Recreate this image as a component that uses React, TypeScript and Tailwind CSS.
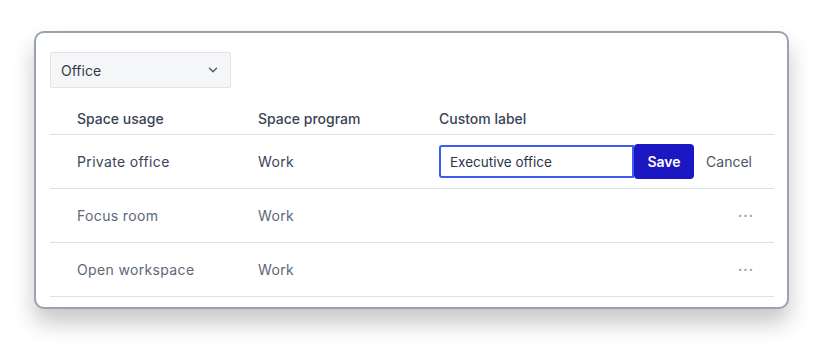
import { ChevronDown } from 'lucide-react';

const rows = [
  { usage: 'Private office', program: 'Work', editing: true },
  { usage: 'Focus room', program: 'Work', editing: false },
  { usage: 'Open workspace', program: 'Work', editing: false },
];

function Row({ usage, program, editing }: { usage: string; program: string; editing: boolean }) {
  const tone = editing ? 'text-[#3a4556]' : 'text-[#5d6778]';
  return (
    <div className="grid h-[54px] grid-cols-[181px_181px_1fr] items-center border-b border-[#dde1e8]">
      <div className={`pl-[27px] text-[14px] tracking-[0.35px] ${tone}`}>{usage}</div>
      <div className={`pl-[27px] text-[14px] tracking-[0.35px] ${tone}`}>{program}</div>
      <div className="flex items-center pl-[27px] pr-[22px]">
        {editing ? (
          <>
            <input
              defaultValue="Executive office"
              className="h-[33px] w-[195px] rounded-l-[3px] border-2 border-[#3d5cf2] bg-white px-[9px] text-[13.5px] text-[#2d3646] outline-none"
            />
            <button className="h-[35px] w-[60px] rounded-[4px] bg-[#1b17c2] text-[14px] font-semibold text-white">
              Save
            </button>
            <button className="ml-auto text-[14px] text-[#4b5565]">Cancel</button>
          </>
        ) : (
          <span className="-mr-[2px] ml-auto text-[13px] font-bold leading-none tracking-[1px] text-[#9aa3b1]">···</span>
        )}
      </div>
    </div>
  );
}

export default function App() {
  return (
    <div className="h-[352px] w-[824px] bg-white pl-[34px] pt-[31px] font-['Inter','Noto_Sans',sans-serif]">
      <div className="h-[278px] w-[755px] rounded-[10px] border-2 border-[#99a2af] bg-white px-[14px] pt-[19px] shadow-[0_14px_22px_rgba(0,0,0,0.22)]">
        <button className="flex h-[36px] w-[181px] items-center justify-between rounded-[2px] border border-[#e0e3e8] bg-[#f5f6f8] pl-[10px] pr-[10px] text-[14px] text-[#333b48]">
          Office
          <ChevronDown size={14} strokeWidth={2.2} className="text-[#4b5563]" />
        </button>
        <div className="mt-[17px] w-[724px]">
          <div className="grid h-[30px] grid-cols-[181px_181px_1fr] items-center border-b border-[#dde1e8] pb-[2px]">
            <div className="pl-[27px] text-[14px] font-medium text-[#3a4453]">Space usage</div>
            <div className="pl-[27px] text-[14px] font-medium text-[#3a4453]">Space program</div>
            <div className="pl-[27px] text-[14px] font-medium text-[#3a4453]">Custom label</div>
          </div>
          {rows.map((r) => (
            <Row key={r.usage} {...r} />
          ))}
        </div>
      </div>
    </div>
  );
}
